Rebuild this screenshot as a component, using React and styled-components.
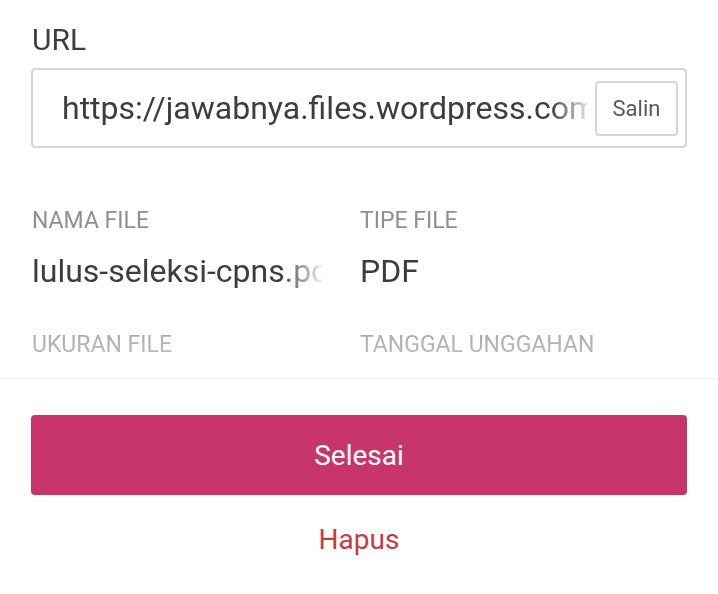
import React from "react";
import styled, { createGlobalStyle } from "styled-components";

const GlobalStyle = createGlobalStyle`
  body {
    margin: 0;
    background: #fff;
    font-family: Roboto, "Noto Sans", sans-serif;
  }
`;

const Sheet = styled.div`
  width: 718px;
  height: 594px;
  display: flex;
  flex-direction: column;
  background: #fff;
`;

const Scroll = styled.div`
  height: 378px;
  flex-shrink: 0;
  overflow: hidden;
  padding: 0 31px;
  box-sizing: border-box;
  -webkit-mask-image: linear-gradient(to bottom, #000 78%, rgba(0, 0, 0, 0.45) 100%);
  mask-image: linear-gradient(to bottom, #000 78%, rgba(0, 0, 0, 0.45) 100%);
`;

const FieldLabel = styled.div`
  margin-top: 22px;
  font-size: 30px;
  line-height: 36px;
  color: #3a3d42;
  padding-left: 1px;
`;

const UrlBox = styled.div`
  margin-top: 10px;
  height: 80px;
  border: 2px solid #d6d6d6;
  border-radius: 4px;
  box-sizing: border-box;
  display: flex;
  align-items: center;
  padding: 0 7px 0 29px;
  gap: 8px;
`;

const UrlText = styled.div`
  flex: 1;
  min-width: 0;
  white-space: nowrap;
  overflow: hidden;
  font-size: 32px;
  color: #3a3d42;
  -webkit-mask-image: linear-gradient(to right, #000 93%, rgba(0, 0, 0, 0.15) 100%);
  mask-image: linear-gradient(to right, #000 93%, rgba(0, 0, 0, 0.15) 100%);
`;

const CopyButton = styled.button`
  width: 83px;
  height: 55px;
  flex-shrink: 0;
  border: 2px solid #d6d6d6;
  border-radius: 4px;
  background: #fff;
  font-family: inherit;
  font-size: 22px;
  color: #55585c;
  padding: 0;
`;

const InfoGrid = styled.div`
  margin-top: 59px;
  display: grid;
  grid-template-columns: 328px 1fr;
  row-gap: 41px;
`;

const InfoCell = styled.div`
  display: flex;
  flex-direction: column;
  gap: 17px;
  padding-left: 1px;
`;

const InfoLabel = styled.div`
  font-size: 23px;
  line-height: 28px;
  color: #8c8f93;
  text-transform: uppercase;
`;

const InfoValue = styled.div`
  font-size: 32px;
  line-height: 38px;
  color: #3a3d42;
  white-space: nowrap;
  overflow: hidden;
  max-width: 290px;
  ${(p) =>
    p.$fade &&
    `
    -webkit-mask-image: linear-gradient(to right, #000 86%, rgba(0, 0, 0, 0.05) 100%);
    mask-image: linear-gradient(to right, #000 86%, rgba(0, 0, 0, 0.05) 100%);
  `}
`;

const Footer = styled.div`
  border-top: 1px solid #efefef;
  padding: 36px 31px 0;
  display: flex;
  flex-direction: column;
  align-items: stretch;
`;

const PrimaryButton = styled.button`
  height: 80px;
  border: none;
  border-radius: 4px;
  background: #c8356b;
  color: #fff;
  font-family: inherit;
  font-size: 28px;
`;

const TextButton = styled.button`
  margin-top: 28px;
  align-self: center;
  border: none;
  background: none;
  color: #c83a3e;
  font-family: inherit;
  font-size: 28px;
  padding: 0;
`;

const info = [
  { label: "Nama file", value: "lulus-seleksi-cpns.pdf", fade: true },
  { label: "Tipe file", value: "PDF" },
  { label: "Ukuran file" },
  { label: "Tanggal unggahan" },
];

export default function App() {
  return (
    <>
      <GlobalStyle />
      <Sheet>
        <Scroll>
          <FieldLabel>URL</FieldLabel>
          <UrlBox>
            <UrlText>https://jawabnya.files.wordpress.com/2018/10/lulus-seleksi-cpns.pdf</UrlText>
            <CopyButton>Salin</CopyButton>
          </UrlBox>
          <InfoGrid>
            {info.map((item) => (
              <InfoCell key={item.label}>
                <InfoLabel>{item.label}</InfoLabel>
                {item.value && <InfoValue $fade={item.fade}>{item.value}</InfoValue>}
              </InfoCell>
            ))}
          </InfoGrid>
        </Scroll>
        <Footer>
          <PrimaryButton>Selesai</PrimaryButton>
          <TextButton>Hapus</TextButton>
        </Footer>
      </Sheet>
    </>
  );
}
